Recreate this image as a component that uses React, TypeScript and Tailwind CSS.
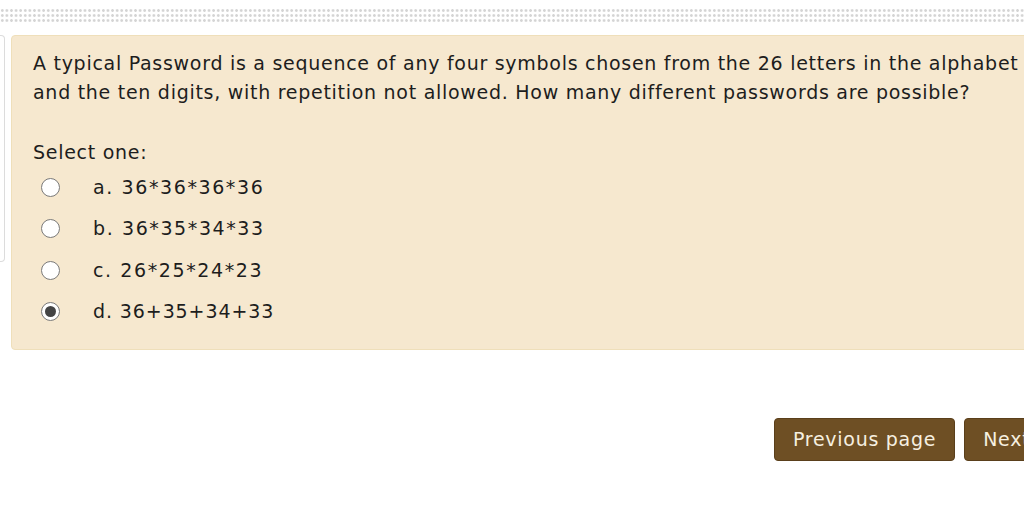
import React from "react"

const OPTIONS = [
  { key: "a", label: "a. 36*36*36*36", checked: false },
  { key: "b", label: "b. 36*35*34*33", checked: false },
  { key: "c", label: "c. 26*25*24*23", checked: false },
  { key: "d", label: "d. 36+35+34+33", checked: true },
]

function Radio({ checked }: { checked: boolean }) {
  return (
    <span className="flex h-[19px] w-[19px] shrink-0 items-center justify-center rounded-full border border-[#7a7a7a] bg-white">
      {checked && <span className="h-[11px] w-[11px] rounded-full bg-[#444444]" />}
    </span>
  )
}

export default function App() {
  return (
    <div
      className="relative h-[509px] w-[1024px] overflow-hidden bg-white text-[#1d1d1d] tracking-[0.72px]"
      style={{ fontFamily: '"DejaVu Sans", Verdana, sans-serif' }}
    >
      {/* dotted strip */}
      <div className="mt-[8px] h-[16px] w-full bg-[radial-gradient(circle,#d4d4d4_1.1px,transparent_1.6px)] bg-[length:4.6px_5px]" />

      <div className="mt-[11px] flex items-start gap-[6px]">
        {/* left drawer edge */}
        <div className="h-[227px] w-[5px] shrink-0 rounded-r-[4px] border-y border-r border-[#dcdcdc] bg-white" />

        {/* question box */}
        <div className="h-[315px] w-[1060px] shrink-0 rounded-[4px] border border-[#efdfba] bg-[#f6e8cf] px-[21px] pt-[13px]">
          <div className="whitespace-nowrap text-[19px] leading-[29px]">
            <p>A typical Password is a sequence of any four symbols chosen from the 26 letters in the alphabet</p>
            <p>and the ten digits, with repetition not allowed. How many different passwords are possible?</p>
          </div>

          <p className="mt-[31px] text-[19px] leading-[29px]">Select one:</p>

          <div className="flex flex-col">
            {OPTIONS.map((o) => (
              <label key={o.key} className="flex h-[41.3px] items-center">
                <span className="ml-[8px] flex w-[52px]">
                  <Radio checked={o.checked} />
                </span>
                <span
                  className={
                    o.checked
                      ? "text-[19px] leading-[29px] tracking-[0.9px]"
                      : "text-[19px] leading-[29px] tracking-[1.6px]"
                  }
                >
                  {o.label}
                </span>
              </label>
            ))}
          </div>
        </div>
      </div>

      {/* navigation buttons */}
      <div className="mt-[68px] flex gap-[9px] pl-[774px]">
        <button className="h-[43px] shrink-0 rounded-[4px] border border-[#5a3f1b] bg-[#6e4f24] px-[18px] text-[19px] text-[#f6f0e0]">
          Previous page
        </button>
        <button className="h-[43px] shrink-0 rounded-[4px] border border-[#5a3f1b] bg-[#6e4f24] px-[18px] text-[19px] text-[#f6f0e0]">
          Next page
        </button>
      </div>
    </div>
  )
}
